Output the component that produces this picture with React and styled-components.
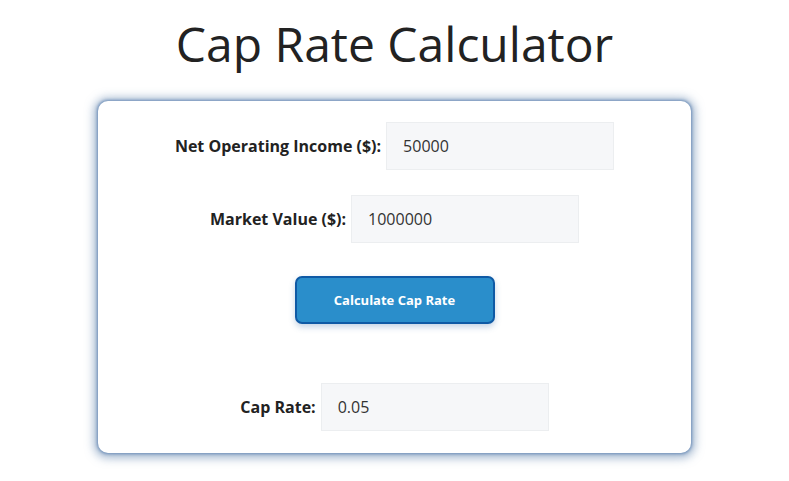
import styled, { createGlobalStyle } from "styled-components";

const GlobalStyle = createGlobalStyle`
  body {
    margin: 0;
    background: #fff;
    font-family: "Segoe UI", "Open Sans", "Noto Sans", sans-serif;
    color: #222;
  }
`;

const Page = styled.div`
  min-height: 100vh;
  box-sizing: border-box;
  padding-bottom: 28px;
  display: flex;
  flex-direction: column;
  align-items: center;
`;

const Title = styled.h1`
  margin: 8px 0 22px;
  font-size: 48px;
  font-weight: 400;
  line-height: 71px;
  color: #222;
`;

const Card = styled.div`
  width: 593px;
  height: 352px;
  box-sizing: border-box;
  padding-top: 21px;
  background: #fff;
  border-radius: 10px;
  box-shadow: 0 0 3px 1px rgba(100, 135, 180, 0.85), 0 1px 10px 4px rgba(90, 125, 170, 0.55);
  display: flex;
  flex-direction: column;
  align-items: center;
`;

const Row = styled.div`
  display: flex;
  align-items: center;
  justify-content: center;
  gap: 5px;
  margin-top: ${(p) => p.$top || 0}px;
`;

const Label = styled.label`
  font-size: 16px;
  font-weight: 700;
  color: #222;
`;

const Input = styled.input`
  width: 228px;
  height: 48px;
  box-sizing: border-box;
  padding: 0 16px;
  border: 1px solid #eceef0;
  background: #f6f7f9;
  font-family: inherit;
  font-size: 16px;
  color: #333;
  outline: none;
`;

const Button = styled.button`
  width: 200px;
  height: 48px;
  margin-top: 33px;
  border: 2px solid #0f5aa5;
  border-radius: 7px;
  background: #2a8ecb;
  color: #fff;
  font-family: inherit;
  font-size: 13px;
  font-weight: 700;
  box-shadow: 0 3px 6px rgba(60, 110, 170, 0.3);
  cursor: pointer;
`;

export default function App() {
  return (
    <Page>
      <GlobalStyle />
      <Title>Cap Rate Calculator</Title>
      <Card>
        <Row>
          <Label>Net Operating Income ($):</Label>
          <Input defaultValue="50000" />
        </Row>
        <Row $top={25}>
          <Label>Market Value ($):</Label>
          <Input defaultValue="1000000" />
        </Row>
        <Button>Calculate Cap Rate</Button>
        <Row $top={59}>
          <Label>Cap Rate:</Label>
          <Input readOnly value="0.05" />
        </Row>
      </Card>
    </Page>
  );
}
